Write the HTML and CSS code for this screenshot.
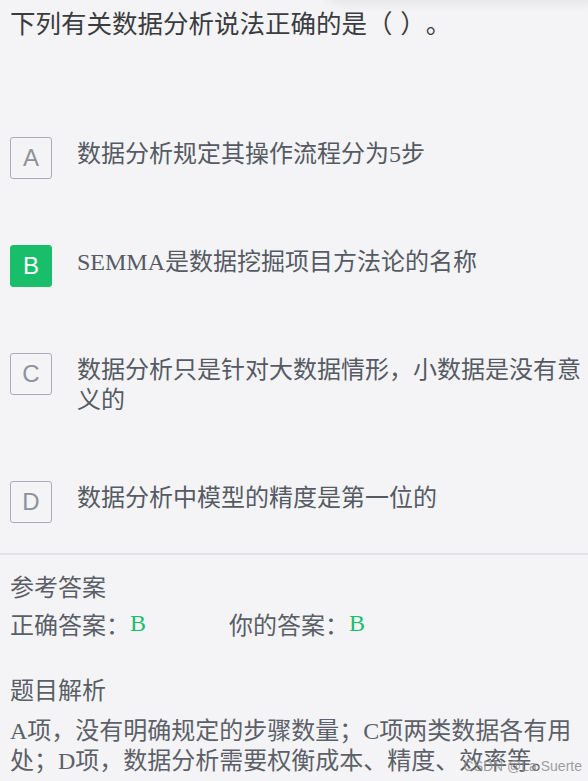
FILE: index.html
```html
<!DOCTYPE html>
<html lang="zh-CN">
<head>
<meta charset="utf-8">
<title>题目</title>
<link rel="stylesheet" href="styles.css">
</head>
<body>
<div class="page">
  <div class="top-shadow"></div>
  <section class="question">
    <h1 class="stem">下列有关数据分析说法正确的是（ ）。</h1>
    <ul class="options">
      <li class="option">
        <span class="letter">A</span>
        <span class="opt-text">数据分析规定其操作流程分为5步</span>
      </li>
      <li class="option">
        <span class="letter letter-right">B</span>
        <span class="opt-text">SEMMA是数据挖掘项目方法论的名称</span>
      </li>
      <li class="option">
        <span class="letter">C</span>
        <span class="opt-text">数据分析只是针对大数据情形，小数据是没有意义的</span>
      </li>
      <li class="option">
        <span class="letter">D</span>
        <span class="opt-text">数据分析中模型的精度是第一位的</span>
      </li>
    </ul>
  </section>
  <div class="divider"></div>
  <section class="answer">
    <div class="heading">参考答案</div>
    <div class="answer-row">
      <span class="answer-item answer-item-first">正确答案：<span class="ans">B</span></span>
      <span class="answer-item">你的答案：<span class="ans">B</span></span>
    </div>
    <div class="heading heading-analysis">题目解析</div>
    <p class="analysis">A项，没有明确规定的步骤数量；C项两类数据各有用处；D项，数据分析需要权衡成本、精度、效率等。</p>
  </section>
  <div class="watermark">CSDN @La Suerte</div>
</div>
</body>
</html>
```

FILE: styles.css
```css
html, body {
  margin: 0;
  padding: 0;
  background: #f4f4f7;
}

body {
  font-family: "Liberation Serif", "Noto Sans CJK SC", serif;
  color: #555a63;
  width: 588px;
  height: 781px;
  overflow: hidden;
  text-spacing-trim: space-all;
}

.page {
  position: relative;
  height: 781px;
  overflow: hidden;
}

.top-shadow {
  position: absolute;
  top: -12px;
  right: -10px;
  width: 270px;
  height: 12px;
  border-radius: 10px;
  box-shadow: 0 3px 12px rgba(0, 0, 0, 0.07);
}

.question {
  padding: 0 4px 0 10px;
}

.stem {
  margin: 0;
  font-family: "Noto Sans CJK SC", sans-serif;
  font-weight: 400;
  font-size: 25.5px;
  line-height: 44px;
  color: #3a3c40;
  word-spacing: 2px;
}

.options {
  list-style: none;
  margin: 93px 0 0 0;
  padding: 0 0 30px 0;
  display: flex;
  flex-direction: column;
  gap: 66px;
}

.option {
  display: flex;
  align-items: flex-start;
}

.letter {
  flex: none;
  box-sizing: border-box;
  width: 42px;
  height: 42px;
  border: 1px solid #a9acb4;
  border-radius: 3px;
  margin-right: 25px;
  text-align: center;
  line-height: 40px;
  font-family: "Liberation Sans", "Noto Sans", sans-serif;
  font-size: 24px;
  color: #8e9299;
}

.letter-right {
  background: #19be6b;
  border-color: #19be6b;
  color: #ffffff;
}

.opt-text {
  margin-top: 2px;
  font-size: 24px;
  line-height: 30px;
  color: #555a63;
}

.divider {
  height: 2px;
  background: #e3e3ec;
}

.answer {
  padding: 14px 4px 0 10px;
  font-size: 24px;
  color: #5a5e66;
}

.heading {
  line-height: 38px;
}

.heading-analysis {
  margin-top: 27px;
}

.answer-row {
  display: flex;
  line-height: 38px;
}

.answer-item-first {
  width: 219px;
}

.ans {
  color: #19be6b;
  position: relative;
  top: -3px;
}

.analysis {
  margin: 6px 0 0 0;
  line-height: 30px;
  color: #5c6068;
}

.watermark {
  position: absolute;
  right: 6px;
  top: 757px;
  font-family: "Liberation Sans", sans-serif;
  font-size: 14px;
  line-height: 18px;
  color: rgba(140, 140, 140, 0.85);
}
```
